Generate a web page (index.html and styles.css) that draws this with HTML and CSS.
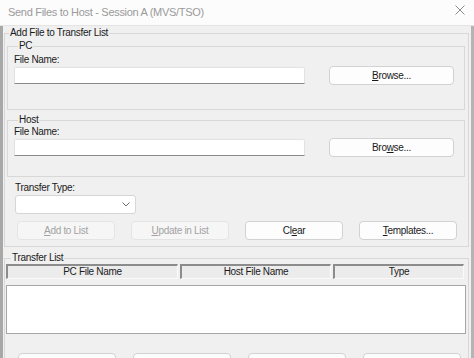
FILE: index.html
```html
<!DOCTYPE html>
<html lang="en">
<head>
  <meta charset="UTF-8">
  <title>Send Files to Host - Session A (MVS/TSO)</title>
  <link rel="stylesheet" href="styles.css">
</head>
<body>
  <div class="titlebar">
    <span class="title">Send Files to Host - Session A (MVS/TSO)</span>
    <svg class="close" width="10" height="10" viewBox="0 0 10 10">
      <path d="M0.5 0.5 L9.5 9.5 M9.5 0.5 L0.5 9.5" stroke="#8c8c8c" stroke-width="1" fill="none"/>
    </svg>
  </div>

  <div class="dialog">
    <fieldset class="group outer">
      <legend>Add File to Transfer List</legend>

      <fieldset class="group sub pc">
        <legend>PC</legend>
        <div class="label">File Name:</div>
        <div class="file-row">
          <input class="text-input" type="text">
          <button class="btn browse"><u>B</u>rowse...</button>
        </div>
      </fieldset>

      <fieldset class="group sub host">
        <legend>Host</legend>
        <div class="label">File Name:</div>
        <div class="file-row">
          <input class="text-input" type="text">
          <button class="btn browse">Bro<u>w</u>se...</button>
        </div>
      </fieldset>

      <div class="type-section">
        <div class="label">Transfer Type:</div>
        <div class="combo">
          <svg width="8" height="5" viewBox="0 0 8 5">
            <path d="M0.5 0.5 L4 4 L7.5 0.5" stroke="#707070" stroke-width="1" fill="none"/>
          </svg>
        </div>
        <div class="btn-row">
          <button class="btn disabled"><u>A</u>dd to List</button>
          <button class="btn disabled"><u>U</u>pdate in List</button>
          <button class="btn">Cl<u>e</u>ar</button>
          <button class="btn"><u>T</u>emplates...</button>
        </div>
      </div>
    </fieldset>

    <fieldset class="group transfer">
      <legend>Transfer List</legend>
      <div class="list-head">
        <div class="col col-pc">PC File Name</div>
        <div class="col col-host">Host File Name</div>
        <div class="col col-type">Type</div>
      </div>
      <div class="list-box"></div>
      <div class="btn-row bottom">
        <button class="btn"></button>
        <button class="btn"></button>
        <button class="btn"></button>
        <button class="btn"></button>
      </div>
    </fieldset>
  </div>
</body>
</html>
```

FILE: styles.css
```css
body {
  margin: 0;
  width: 474px;
  height: 358px;
  overflow: hidden;
  background: #f0f0f0;
  font-family: "Liberation Sans", Arial, sans-serif;
  font-size: 10px;
  letter-spacing: -0.3px;
  color: #1a1a1a;
}

.titlebar {
  height: 23px;
  background: #fcfcfc;
  border-bottom: 1px solid #e4e4e4;
  display: flex;
  align-items: center;
  justify-content: space-between;
  padding: 0 9px 2px 8px;
}

.title {
  font-size: 11px;
  color: #9a9a9a;
}

.close {
  display: block;
  margin-top: -3px;
}

.dialog {
  height: 334px;
  border-left: 3px solid #a8a8a8;
  border-right: 3px solid #b4b4b4;
  padding: 1px 2px 0 1px;
}

.group {
  margin: 0;
  border: 1px solid #d8d8d8;
  padding: 1px 3px 0 2px;
}

.group legend {
  line-height: 12px;
  padding: 0 1px;
  margin-left: 2px;
}

.sub legend {
  margin-left: 4px;
}

.outer {
  padding-bottom: 6px;
}

.sub {
  padding: 2px 10px 24px 6px;
}

.host {
  margin-top: 4px;
  padding-top: 0;
  padding-bottom: 19px;
}

.label {
  line-height: 12px;
}

.file-row {
  display: flex;
  align-items: center;
  justify-content: space-between;
}

.text-input {
  width: 291px;
  height: 17px;
  box-sizing: border-box;
  margin: 0;
  background: #fff;
  border: 1px solid #e2e2e2;
  border-bottom-color: #8a8a8a;
  border-radius: 2px 2px 0 0;
}

.btn {
  height: 19px;
  box-sizing: border-box;
  margin: 0;
  padding: 0;
  background: #fdfdfd;
  border: 1px solid #d2d2d2;
  border-radius: 4px;
  font-family: inherit;
  font-size: 10px;
  letter-spacing: -0.3px;
  color: #1a1a1a;
}

.btn.disabled {
  background: #f6f6f6;
  border-color: #e4e4e4;
  color: #a2a2a2;
}

.browse {
  width: 125px;
}

.type-section {
  padding: 5px 0 0 8px;
}

.combo {
  width: 121px;
  height: 19px;
  box-sizing: border-box;
  margin-top: 1px;
  background: #fff;
  border: 1px solid #d6d6d6;
  border-radius: 3px;
  display: flex;
  align-items: center;
  justify-content: flex-end;
  padding-right: 5px;
}

.combo svg {
  display: block;
}

.btn-row {
  display: grid;
  grid-template-columns: repeat(4, 98px);
  column-gap: 16px;
  margin: 7px 0 0 2px;
}

.transfer {
  margin-top: 6px;
  padding: 0 2px 0 1px;
  border-bottom: none;
}

.transfer legend {
  margin-left: 5px;
  line-height: 10px;
}

.list-head {
  display: flex;
  margin-top: 1px;
}

.col {
  height: 15px;
  box-sizing: border-box;
  border-top: 2px solid #8c8c8c;
  border-left: 2px solid #8c8c8c;
  border-right: 1px solid #fafafa;
  border-bottom: 1px solid #fafafa;
  background: #ececec;
  text-align: center;
  line-height: 12px;
  margin-right: 2px;
}

.col-pc {
  width: 172px;
}

.col-host {
  width: 151px;
}

.col-type {
  width: 131px;
  margin-right: 0;
}

.list-box {
  height: 47px;
  margin-top: 6px;
  background: #fff;
  border: 1px solid #a6a6a6;
}

.btn-row.bottom {
  margin: 19px 0 0 12px;
  column-gap: 17px;
}
```
